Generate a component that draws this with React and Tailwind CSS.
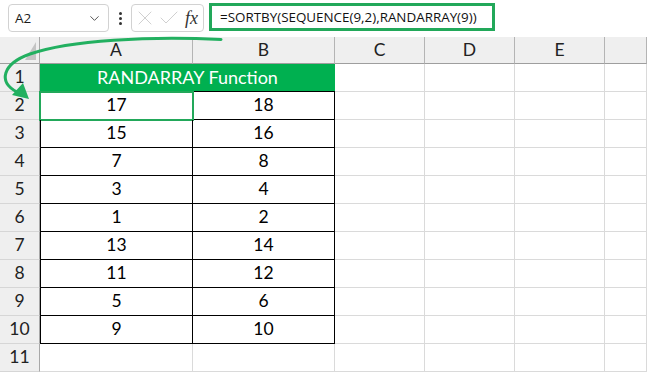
import React from "react";
import { ChevronDown, X, Check } from "lucide-react";

const rows = [
  [17, 18],
  [15, 16],
  [7, 8],
  [3, 4],
  [1, 2],
  [13, 14],
  [11, 12],
  [5, 6],
  [9, 10],
];

const cols = ["A", "B", "C", "D", "E", ""];

const RowHead = ({ n }) => (
  <div className="h-[28px] bg-[#efefef] border-r border-b border-r-[#a8a8a8] border-b-[#d6d6d6] flex items-center justify-center text-[17.5px] text-[#222]">
    {n}
  </div>
);

const Empty = () => <div className="h-[28px] border-r border-b border-[#dadada]" />;

const App = () => {
  return (
    <div className="relative w-[647px] h-[372px] overflow-hidden bg-white font-['Lato','Liberation_Sans',sans-serif] text-black">
      {/* formula bar */}
      <div className="h-[37px] flex items-start pt-[4px] pl-[8px]">
        <div className="w-[101px] h-[28px] border border-[#d2d2d2] rounded-[4px] flex items-center justify-between pl-[6px] pr-[6px] font-['Open_Sans',sans-serif] text-[13.5px] text-[#1a1a1a]">
          <span>A2</span>
          <ChevronDown size={15} strokeWidth={1.6} className="text-[#555]" />
        </div>
        <div className="w-[22px] h-[28px] flex flex-col items-center justify-center gap-[2px]">
          <span className="w-[3px] h-[3px] rounded-full bg-[#333]" />
          <span className="w-[3px] h-[3px] rounded-full bg-[#333]" />
          <span className="w-[3px] h-[3px] rounded-full bg-[#333]" />
        </div>
        <div className="w-[73px] h-[28px] border border-[#d2d2d2] rounded-[4px] flex items-center pl-[1px]">
          <X size={24} strokeWidth={0.8} className="text-[#c4c4c4]" />
          <Check size={24} strokeWidth={0.8} className="text-[#c4c4c4]" />
          <span className="ml-[4px] font-['Liberation_Serif',serif] italic text-[18px] text-[#333] leading-none">
            fx
          </span>
        </div>
        <div className="ml-[5px] -mt-[1px] w-[286px] h-[28px] border-[3px] border-[#22a85a] flex items-center pl-[8px] font-['Open_Sans',sans-serif] text-[13.4px] text-[#111]">
          =SORTBY(SEQUENCE(9,2),RANDARRAY(9))
        </div>
      </div>

      {/* sheet */}
      <div className="grid grid-cols-[40px_153px_142px_90px_90px_90px_42px]">
        <div className="relative h-[27px] bg-[#efefef] border-r border-b border-r-[#a8a8a8] border-b-[#9e9e9e]">
          <svg className="absolute right-[3px] bottom-[3px]" width="11" height="18" viewBox="0 0 11 18">
            <polygon points="11,0 11,18 0,18" fill="#c4c4c4" />
          </svg>
        </div>
        {cols.map((c, i) => (
          <div
            key={i}
            className="h-[27px] bg-[#efefef] border-r border-b border-r-[#b4b4b4] border-b-[#9e9e9e] flex items-center justify-center text-[17.5px] text-[#222]"
          >
            {c}
          </div>
        ))}

        <RowHead n={1} />
        <div className="col-span-2 h-[28px] bg-[#00b050] border-b border-black flex items-center justify-center text-white text-[18px]">
          RANDARRAY Function
        </div>
        <Empty />
        <Empty />
        <Empty />
        <Empty />

        {rows.map((r, i) => (
          <React.Fragment key={i}>
            <RowHead n={i + 2} />
            <div className="relative h-[28px] border-l border-r border-b border-black flex items-center justify-center text-[17.5px]">
              {r[0]}
              {i === 0 && (
                <div className="absolute -left-[2px] -top-[1px] -right-[2px] -bottom-[2px] border-[2.5px] border-[#22a85a]" />
              )}
            </div>
            <div className="h-[28px] border-r border-b border-black flex items-center justify-center text-[17.5px]">
              {r[1]}
            </div>
            <Empty />
            <Empty />
            <Empty />
            <Empty />
          </React.Fragment>
        ))}

        <RowHead n={11} />
        <Empty />
        <Empty />
        <Empty />
        <Empty />
        <Empty />
        <Empty />
      </div>

      {/* annotation arrow */}
      <svg className="absolute left-0 top-0 pointer-events-none" width="647" height="372">
        <path
          d="M221 39.5 C150 36 70 40 30 54 C2 64 -2 82 17 92"
          fill="none"
          stroke="#22b060"
          strokeWidth="3"
          strokeLinecap="round"
        />
        <polygon points="29,99 12,95 23,83" fill="#22b060" />
      </svg>
    </div>
  );
};

export default App;
